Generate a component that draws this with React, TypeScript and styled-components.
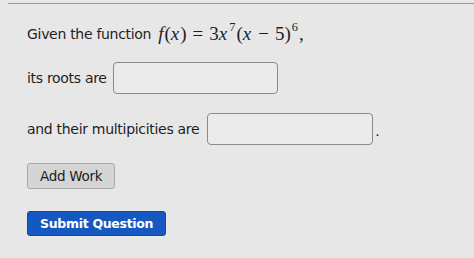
import * as React from 'react';
import styled, { createGlobalStyle } from 'styled-components';

const Global = createGlobalStyle`
  html, body {
    margin: 0;
    padding: 0;
    background: #e7e7e7;
  }
  body {
    font-family: "DejaVu Sans", Verdana, sans-serif;
    color: #1e1e1e;
  }
`;

const Page = styled.div`
  width: 474px;
  height: 258px;
  overflow: hidden;
  padding-top: 3px;
  box-sizing: border-box;
`;

const Rule = styled.div`
  margin-left: 8px;
  border-top: 1px solid #9b9b9b;
`;

const Body = styled.div`
  display: flex;
  flex-direction: column;
  align-items: flex-start;
  padding-left: 27px;
`;

const Row = styled.div<{ $top: number; $h: number }>`
  display: flex;
  align-items: center;
  height: ${p => p.$h}px;
  margin-top: ${p => p.$top}px;
  font-size: 14px;
  letter-spacing: -0.3px;
  white-space: nowrap;
`;

const Math = styled.span`
  font-family: "Liberation Serif", "Times New Roman", serif;
  font-size: 19px;
  letter-spacing: 0;
  margin-left: 7px;
  display: inline-block;
`;

const V = styled.i`
  font-style: italic;
  margin-right: 1px;
`;

const Op = styled.span`
  margin: 0 6px;
`;

const Sup = styled.span`
  font-size: 12.5px;
  position: relative;
  top: -9px;
  margin: 0 1px;
`;

const Box = styled.div<{ $w: number; $gap: number }>`
  width: ${p => p.$w}px;
  height: 32px;
  box-sizing: border-box;
  margin-left: ${p => p.$gap}px;
  border: 1px solid #8a8a8a;
  border-radius: 4px;
  background: #ebebeb;
`;

const Dot = styled.span`
  margin-left: 2px;
  align-self: flex-end;
  padding-bottom: 6px;
`;

const Button = styled.button<{ $primary?: boolean; $top: number }>`
  margin-top: ${p => p.$top}px;
  height: ${p => (p.$primary ? 25 : 26)}px;
  padding: 0 12px;
  border-radius: 3px;
  font-family: "DejaVu Sans", Verdana, sans-serif;
  cursor: pointer;
  white-space: nowrap;
  border: 1px solid ${p => (p.$primary ? '#0f4aa9' : '#a9a9a9')};
  background: ${p => (p.$primary ? '#1558c2' : '#d5d5d5')};
  color: ${p => (p.$primary ? '#ffffff' : '#1c1c1c')};
  font-size: ${p => (p.$primary ? '12.5px' : '13.5px')};
  font-weight: ${p => (p.$primary ? 700 : 400)};
  letter-spacing: -0.3px;
`;

export default function App() {
  return (
    <Page>
      <Global />
      <Rule />
      <Body>
        <Row $top={18} $h={24}>
          Given the function
          <Math>
            <V>f</V>(<V>x</V>)<Op>=</Op>3<V>x</V>
            <Sup>7</Sup>(<V>x</V>
            <Op>−</Op>5)<Sup>6</Sup>,
          </Math>
        </Row>
        <Row $top={16} $h={32}>
          its roots are
          <Box $w={165} $gap={6} />
        </Row>
        <Row $top={19} $h={32}>
          and their multipicities are
          <Box $w={166} $gap={8} />
          <Dot>.</Dot>
        </Row>
        <Button $top={18}>Add Work</Button>
        <Button $top={22} $primary>
          Submit Question
        </Button>
      </Body>
    </Page>
  );
}
